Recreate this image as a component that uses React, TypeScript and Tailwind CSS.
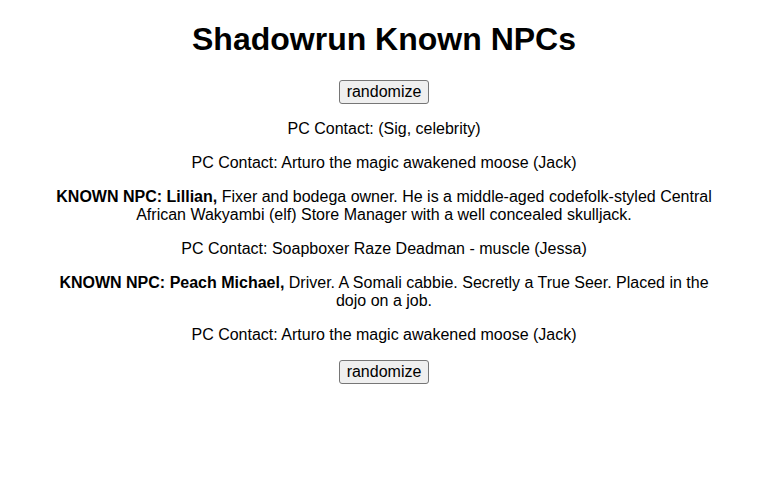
import { useState } from 'react'

const contacts = [
  'PC Contact: (Sig, celebrity)',
  'PC Contact: Arturo the magic awakened moose (Jack)',
]

type Npc = { name: string; desc: string }

const npcs: Npc[] = [
  {
    name: 'Lillian',
    desc: 'Fixer and bodega owner. He is a middle-aged codefolk-styled Central African Wakyambi (elf) Store Manager with a well concealed skulljack.',
  },
  {
    name: 'Peach Michael',
    desc: 'Driver. A Somali cabbie. Secretly a True Seer. Placed in the dojo on a job.',
  },
]

function RandomizeButton({ onClick }: { onClick: () => void }) {
  return (
    <button
      onClick={onClick}
      className="bg-[#efefef] border border-[#767676] rounded-[3px] px-[7px] py-[1px] text-base leading-[20px] text-black hover:bg-[#e5e5e5]"
    >
      randomize
    </button>
  )
}

export default function App() {
  const [seed, setSeed] = useState(0)

  return (
    <div className="min-h-screen bg-white text-black text-center font-['Liberation_Sans',Arial,sans-serif] text-base">
      <h1 className="text-[32px] font-bold leading-[37px] pt-[21px] mb-[22px]">Shadowrun Known NPCs</h1>
      <RandomizeButton onClick={() => setSeed(seed + 1)} />
      <div className="mx-auto max-w-2xl">
        <p className="my-4 leading-[18px]">{contacts[0]}</p>
        <p className="my-4 leading-[18px]">{contacts[1]}</p>
        <p className="my-4 leading-[18px]">
          <b>KNOWN NPC: {npcs[0].name},</b> {npcs[0].desc}
        </p>
        <p className="my-4 leading-[18px]">PC Contact: Soapboxer Raze Deadman - muscle (Jessa)</p>
        <p className="my-4 leading-[18px]">
          <b>KNOWN NPC: {npcs[1].name},</b> {npcs[1].desc}
        </p>
        <p className="my-4 leading-[18px]">{contacts[1]}</p>
      </div>
      <RandomizeButton onClick={() => setSeed(seed + 1)} />
    </div>
  )
}
